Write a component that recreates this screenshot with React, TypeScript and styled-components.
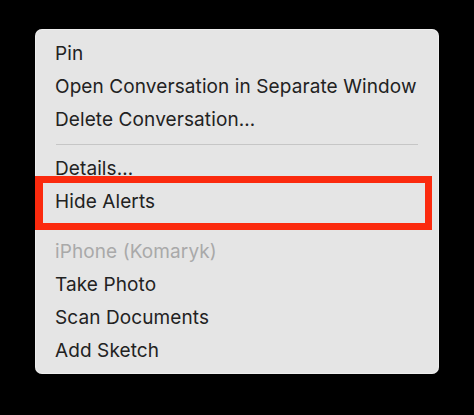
import React from "react";
import styled, { createGlobalStyle } from "styled-components";

const Global = createGlobalStyle`
  html, body {
    margin: 0;
    padding: 0;
    background: #000;
  }
  body {
    width: 474px;
    height: 415px;
    overflow: hidden;
    font-family: Inter, "Noto Sans", "Liberation Sans", sans-serif;
  }
`;

const Stage = styled.div`
  width: 474px;
  height: 415px;
  background: #000;
  padding: 29px 0 0 35px;
  box-sizing: border-box;
`;

const Menu = styled.div`
  position: relative;
  width: 404px;
  height: 345px;
  box-sizing: border-box;
  background: #e5e5e5;
  border-radius: 7px;
  box-shadow: inset 0 0 0 1px rgba(255, 255, 255, 0.35);
  padding: 8px 0 7px 0;
  display: flex;
  flex-direction: column;
`;

const Item = styled.div<{ $disabled?: boolean }>`
  height: 33px;
  line-height: 33px;
  padding-left: 20px;
  font-size: 19px;
  letter-spacing: 0.1px;
  color: ${(p) => (p.$disabled ? "#a9a9a9" : "#222222")};
  white-space: nowrap;
`;

const Separator = styled.div<{ $hidden?: boolean }>`
  height: 16px;
  display: flex;
  align-items: center;
  padding: 0 21px 0 21px;
  &::after {
    content: "";
    flex: 1;
    height: 1px;
    background: ${(p) => (p.$hidden ? "transparent" : "#c6c6c6")};
  }
`;

const Highlight = styled.div`
  position: absolute;
  left: 0;
  top: 147px;
  width: 397px;
  height: 54px;
  box-sizing: border-box;
  border: 7px solid #fb2a0e;
  border-left-width: 8px;
  pointer-events: none;
`;

export default function App() {
  return (
    <>
      <Global />
      <Stage>
        <Menu>
          <Item>Pin</Item>
          <Item>Open Conversation in Separate Window</Item>
          <Item>Delete Conversation…</Item>
          <Separator />
          <Item>Details…</Item>
          <Item>Hide Alerts</Item>
          <Separator $hidden style={{ height: 17 }} />
          <Item $disabled>iPhone (Komaryk)</Item>
          <Item>Take Photo</Item>
          <Item>Scan Documents</Item>
          <Item>Add Sketch</Item>
          <Highlight />
        </Menu>
      </Stage>
    </>
  );
}
